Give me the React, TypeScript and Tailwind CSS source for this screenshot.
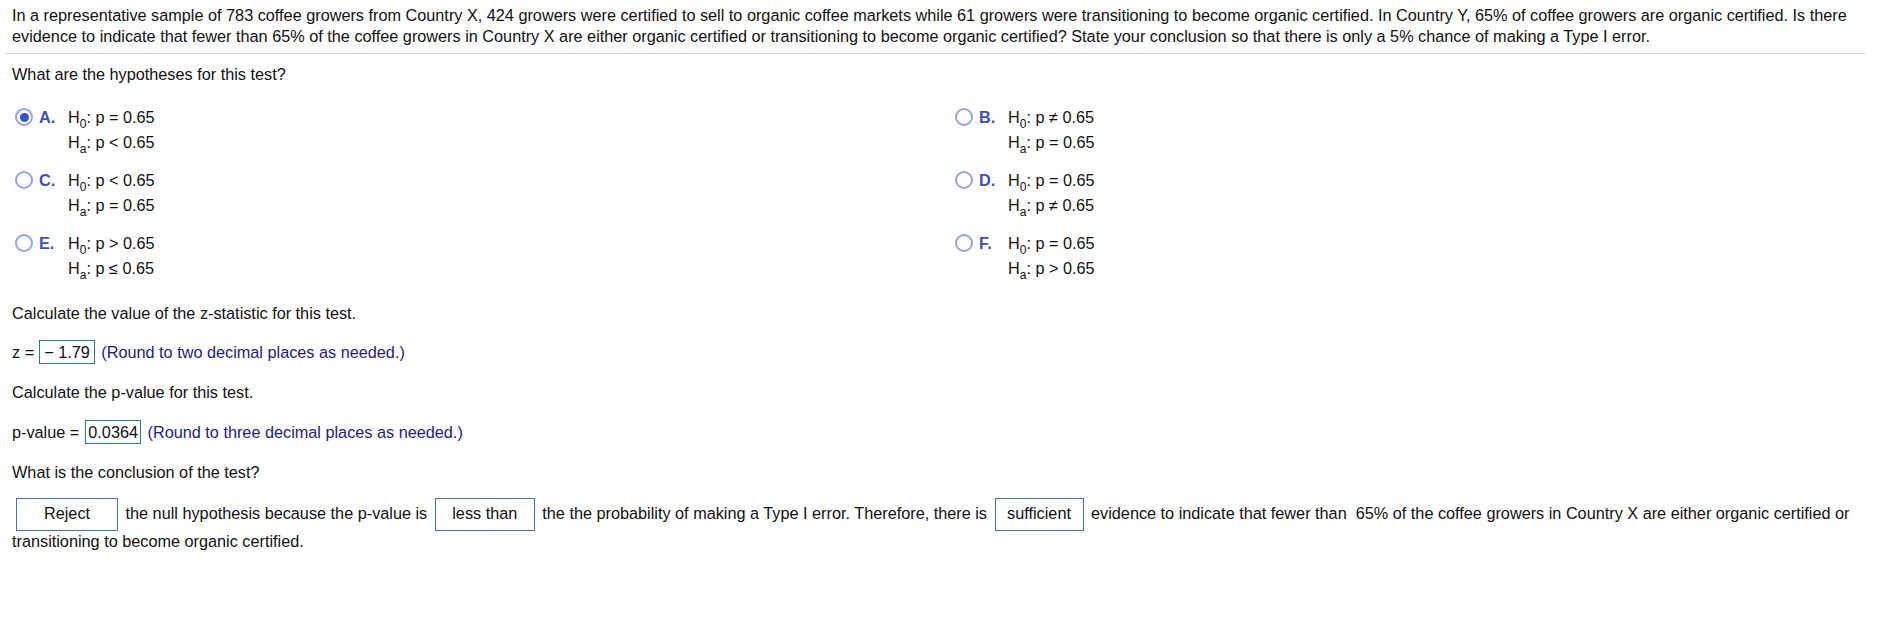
import React from 'react';

type Opt = { letter: string; h0: string; ha: string; selected?: boolean };

const options: Opt[] = [
  { letter: 'A', h0: 'p = 0.65', ha: 'p < 0.65', selected: true },
  { letter: 'B', h0: 'p ≠ 0.65', ha: 'p = 0.65' },
  { letter: 'C', h0: 'p < 0.65', ha: 'p = 0.65' },
  { letter: 'D', h0: 'p = 0.65', ha: 'p ≠ 0.65' },
  { letter: 'E', h0: 'p > 0.65', ha: 'p ≤ 0.65' },
  { letter: 'F', h0: 'p = 0.65', ha: 'p > 0.65' },
];

const Radio: React.FC<{ on?: boolean }> = ({ on }) => (
  <span className="ml-[3px] mt-[3px] flex h-[18px] w-[18px] shrink-0 items-center justify-center rounded-full border-2 border-[#93a3e8] bg-white">
    {on && <span className="h-[9px] w-[9px] rounded-full bg-[#3d55c4]" />}
  </span>
);

const Option: React.FC<Opt> = ({ letter, h0, ha, selected }) => (
  <div className="flex items-start">
    <Radio on={selected} />
    <span className="ml-[6px] w-[29px] shrink-0 font-bold leading-[25px] text-[#3c4fc1]">{letter}.</span>
    <div className="leading-[25px]">
      <div>
        H<span className="align-[-5px] text-[12px] leading-none">0</span>: {h0}
      </div>
      <div>
        H<span className="align-[-5px] text-[12px] leading-none">a</span>: {ha}
      </div>
    </div>
  </div>
);

const Pick: React.FC<{ w: string; children: React.ReactNode; first?: boolean }> = ({ w, children, first }) => (
  <span
    className={`inline-block border border-[#4272d0] pt-[4px] pb-[6px] text-center ${w} ${first ? 'ml-[4px] mr-[3px]' : 'mx-[3px]'}`}
  >
    {children}
  </span>
);

export default function App() {
  return (
    <div className="min-h-screen bg-white pl-[5px] pr-[12px] pt-[5px] font-['Liberation_Sans',Arial,sans-serif] text-[16.25px] leading-[21px] text-[#111]">
      <p className="pl-[7px]">
        In a representative sample of 783 coffee growers from Country X, 424 growers were certified to sell to organic
        coffee markets while 61 growers were transitioning to become organic certified. In Country Y, 65% of coffee
        growers are organic certified. Is there evidence to indicate that fewer than 65% of the coffee growers in Country
        X are either organic certified or transitioning to become organic certified? State your conclusion so that there
        is only a 5% chance of making a Type I error.
      </p>

      <div className="mt-[6px] border-t border-[#cdd3dd]" />

      <div className="pl-[7px]">
        <p className="mt-[10px]">What are the hypotheses for this test?</p>

        <div className="mt-[20px] grid grid-cols-[940px_1fr] gap-y-[13px]">
          {options.map((o) => (
            <Option key={o.letter} {...o} />
          ))}
        </div>

        <p className="mt-[22px]">Calculate the value of the z-statistic for this test.</p>

        <p className="mt-[16px]">
          z =
          <span className="ml-[5px] mr-[2px] inline-block border border-[#2b7a9b] px-[4px] pt-[1px]">− 1.79</span>{' '}
          <span className="text-[#1c1c86]">(Round to two decimal places as needed.)</span>
        </p>

        <p className="mt-[18px]">Calculate the p-value for this test.</p>

        <p className="mt-[17px]">
          p-value =
          <span className="ml-[6px] mr-[2px] inline-block border border-[#2b7a9b] px-[2px] pt-[1px]">0.0364</span>{' '}
          <span className="text-[#1c1c86]">(Round to three decimal places as needed.)</span>
        </p>

        <p className="mt-[18px]">What is the conclusion of the test?</p>

        <p className="mt-[15px]">
          <Pick w="w-[102px]" first>
            Reject
          </Pick>{' '}
          the null hypothesis because the p-value is <Pick w="w-[100px]">less than</Pick> the the probability of making
          a Type I error. Therefore, there is <Pick w="w-[89px]">sufficient</Pick> evidence to indicate that fewer
          than{'\u00a0'} 65% of the coffee growers in Country X are either organic certified or transitioning to become
          organic certified.
        </p>
      </div>
    </div>
  );
}
